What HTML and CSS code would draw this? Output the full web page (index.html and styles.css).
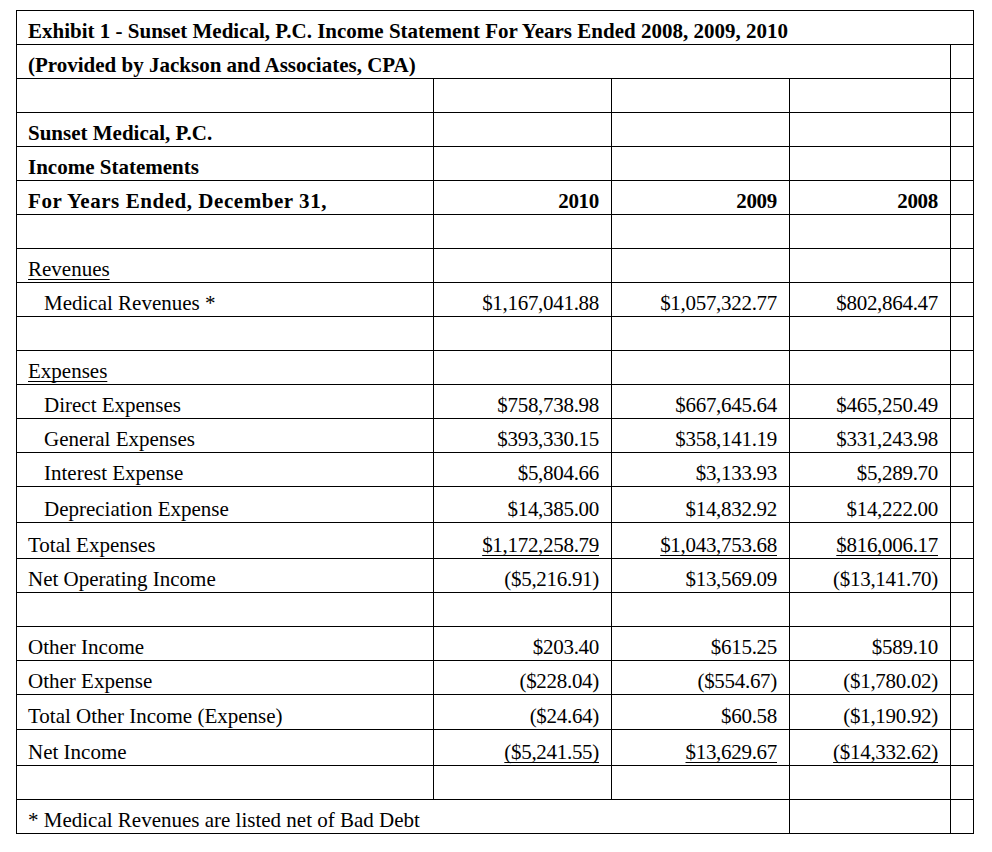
FILE: index.html
```html
<!DOCTYPE html>
<html>
<head>
<meta charset="utf-8">
<title>Exhibit 1 - Sunset Medical, P.C. Income Statement</title>
<link rel="stylesheet" href="styles.css">
</head>
<body>
<div class="sheet">
<table class="stmt">
  <colgroup>
    <col class="c-label">
    <col class="c-num">
    <col class="c-num">
    <col class="c-num3">
    <col class="c-end">
  </colgroup>
  <tr><td colspan="5" class="bold">Exhibit 1 - Sunset Medical, P.C. Income Statement For Years Ended 2008, 2009, 2010</td></tr>
  <tr><td colspan="4" class="bold">(Provided by Jackson and Associates, CPA)</td><td></td></tr>
  <tr><td></td><td></td><td></td><td></td><td></td></tr>
  <tr><td class="bold">Sunset Medical, P.C.</td><td></td><td></td><td></td><td></td></tr>
  <tr><td class="bold">Income Statements</td><td></td><td></td><td></td><td></td></tr>
  <tr><td class="bold wide">For Years Ended, December 31,</td><td class="num bold">2010</td><td class="num bold">2009</td><td class="num bold">2008</td><td></td></tr>
  <tr><td></td><td></td><td></td><td></td><td></td></tr>
  <tr><td><span class="ul">Revenues</span></td><td></td><td></td><td></td><td></td></tr>
  <tr><td class="ind">Medical Revenues *</td><td class="num">$1,167,041.88</td><td class="num">$1,057,322.77</td><td class="num">$802,864.47</td><td></td></tr>
  <tr><td></td><td></td><td></td><td></td><td></td></tr>
  <tr><td><span class="ul">Expenses</span></td><td></td><td></td><td></td><td></td></tr>
  <tr><td class="ind">Direct Expenses</td><td class="num">$758,738.98</td><td class="num">$667,645.64</td><td class="num">$465,250.49</td><td></td></tr>
  <tr><td class="ind">General Expenses</td><td class="num">$393,330.15</td><td class="num">$358,141.19</td><td class="num">$331,243.98</td><td></td></tr>
  <tr><td class="ind">Interest Expense</td><td class="num">$5,804.66</td><td class="num">$3,133.93</td><td class="num">$5,289.70</td><td></td></tr>
  <tr class="tall"><td class="ind">Depreciation Expense</td><td class="num">$14,385.00</td><td class="num">$14,832.92</td><td class="num">$14,222.00</td><td></td></tr>
  <tr class="tall"><td>Total Expenses</td><td class="num"><span class="ul">$1,172,258.79</span></td><td class="num"><span class="ul">$1,043,753.68</span></td><td class="num"><span class="ul">$816,006.17</span></td><td></td></tr>
  <tr><td>Net Operating Income</td><td class="num">($5,216.91)</td><td class="num">$13,569.09</td><td class="num">($13,141.70)</td><td></td></tr>
  <tr><td></td><td></td><td></td><td></td><td></td></tr>
  <tr><td>Other Income</td><td class="num">$203.40</td><td class="num">$615.25</td><td class="num">$589.10</td><td></td></tr>
  <tr><td>Other Expense</td><td class="num">($228.04)</td><td class="num">($554.67)</td><td class="num">($1,780.02)</td><td></td></tr>
  <tr class="mid"><td>Total Other Income (Expense)</td><td class="num">($24.64)</td><td class="num">$60.58</td><td class="num">($1,190.92)</td><td></td></tr>
  <tr class="tall"><td>Net Income</td><td class="num"><span class="ul">($5,241.55)</span></td><td class="num"><span class="ul">$13,629.67</span></td><td class="num"><span class="ul">($14,332.62)</span></td><td></td></tr>
  <tr><td></td><td></td><td></td><td></td><td></td></tr>
  <tr><td colspan="3">* Medical Revenues are listed net of Bad Debt</td><td></td><td></td></tr>
</table>
</div>
</body>
</html>
```

FILE: styles.css
```css
html, body {
  margin: 0;
  padding: 0;
  background: #ffffff;
}

.sheet {
  padding: 10px 0 0 16px;
}

.stmt {
  border-collapse: collapse;
  table-layout: fixed;
  width: 957px;
  font-family: "Liberation Serif", "Times New Roman", serif;
  font-size: 21px;
  color: #000000;
}

.c-label { width: 417px; }
.c-num { width: 178px; }
.c-num3 { width: 161px; }
.c-end { width: 23px; }

.stmt td {
  border: 1px solid #000000;
  height: 34px;
  box-sizing: border-box;
  padding: 0 11px 2px 11px;
  vertical-align: bottom;
  white-space: nowrap;
  line-height: 22px;
}

.stmt tr.tall td { height: 36px; }
.stmt tr.mid td { height: 35px; }

.bold { font-weight: bold; }

.stmt td.wide { letter-spacing: 0.55px; }

.stmt td.ind { padding-left: 27px; }

.stmt td.num {
  text-align: right;
  padding-right: 12px;
  letter-spacing: -0.3px;
}

.ul {
  text-decoration: underline;
  text-decoration-thickness: 1px;
  text-underline-offset: 3px;
  text-decoration-skip-ink: none;
}
```
